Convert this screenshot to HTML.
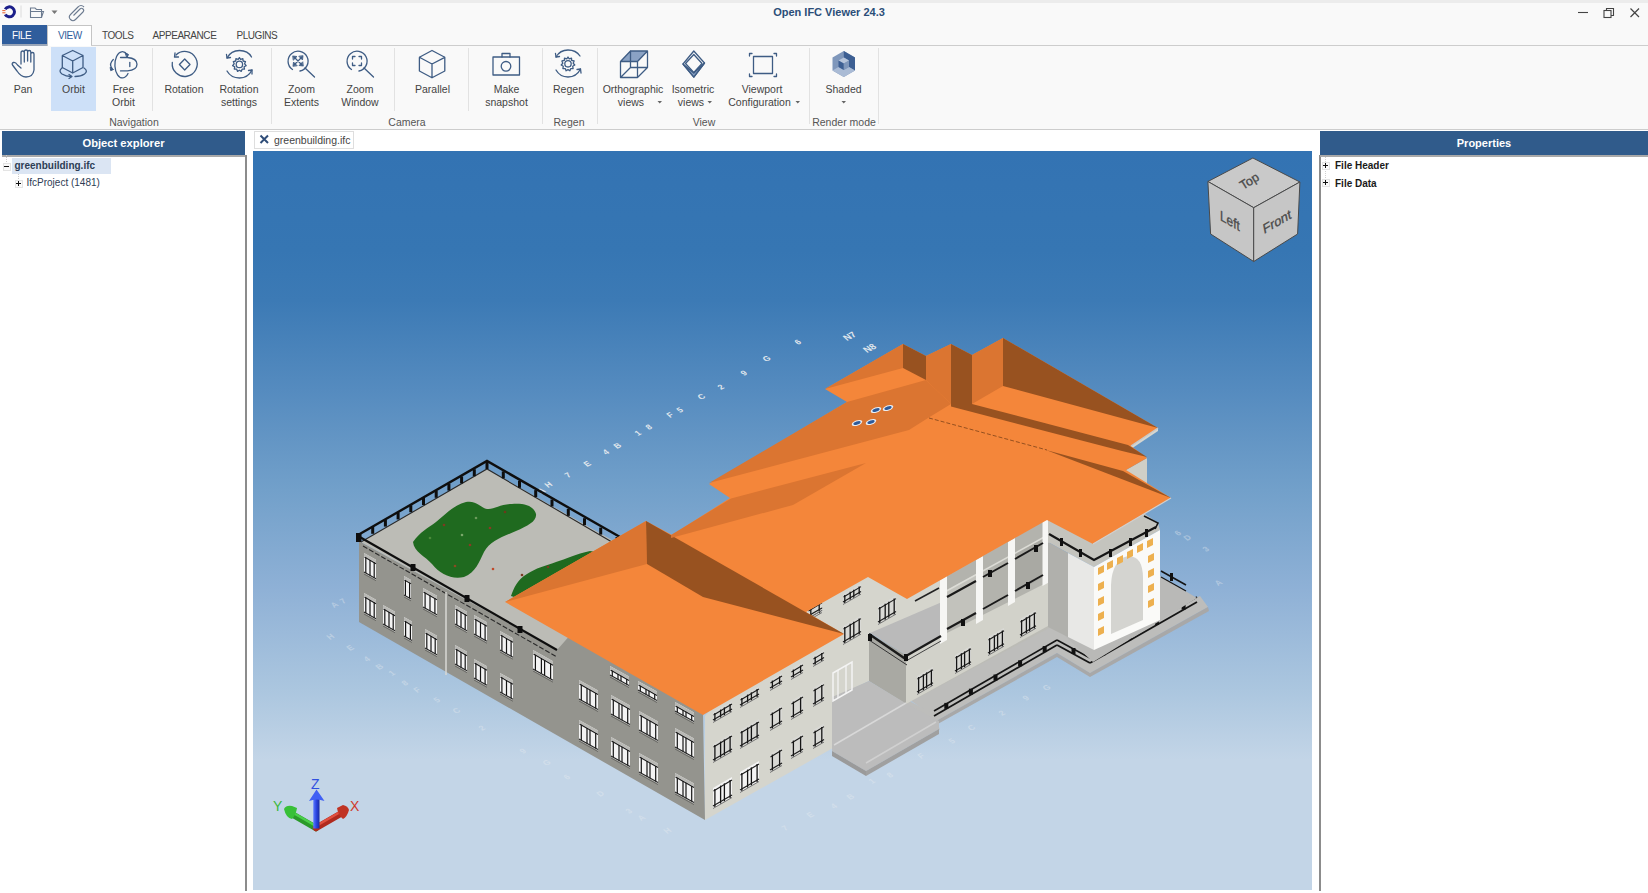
<!DOCTYPE html>
<html><head><meta charset="utf-8">
<style>
*{margin:0;padding:0;box-sizing:border-box}
html,body{width:1648px;height:893px;overflow:hidden;background:#ffffff;font-family:"Liberation Sans",sans-serif;position:relative}
.a{position:absolute}
.t{position:absolute;white-space:nowrap;font-size:10.5px;color:#444;line-height:13.5px}
.c{text-align:center;transform:translateX(-50%)}
.sep{position:absolute;width:1px;background:#e2e2e2}
.hdr{position:absolute;background:#305b8b;color:#fff;font-weight:bold;font-size:11.2px;text-align:center;line-height:24px}
svg.i{position:absolute;overflow:visible}
svg.i *{fill:none;stroke:#3e5c84;stroke-width:1.3;stroke-linecap:round;stroke-linejoin:round}
.tab{position:absolute;white-space:nowrap;font-size:10px;letter-spacing:-0.45px;color:#444;line-height:12px;top:30px}
</style></head><body>
<!-- title bar -->
<div class="a" style="left:0;top:0;width:1648px;height:45px;background:#f9f9f9"></div>
<div class="a" style="left:0;top:0;width:1648px;height:3px;background:#ececec"></div>
<svg class="a" style="left:0;top:0" width="100" height="25">
 <path d="M5.2,9.3 A5,5 0 1 1 5.2,14.4" fill="none" stroke="#1b1f8a" stroke-width="3"/>
 <rect x="2.3" y="10.1" width="3.2" height="1" fill="#e8602e"/>
 <rect x="2.3" y="12.3" width="3.2" height="1" fill="#e8602e"/>
 <line x1="21" y1="5.5" x2="21" y2="17.5" stroke="#dcdcdc" stroke-width="1"/>
 <path d="M30.5,8 L35,8 L36.5,9.5 L41.5,9.5 L41.5,17.5 L30.5,17.5 Z M30.5,11.5 L43.5,11.5 L41.5,17.5" fill="none" stroke="#6c7b90" stroke-width="1.1"/>
 <path d="M51.5,10.5 L57.5,10.5 L54.5,14 Z" fill="#777"/>
 <path d="M73.5,15.5 L80,9 Q81.5,7.5 83,9 Q84.5,10.5 83,12 L75.5,19.5 Q73,22 70.5,19.5 Q68,17 70.5,14.5 L78,7 Q81,4 84,7" fill="none" stroke="#6c7b90" stroke-width="1.1"/>
</svg>
<div class="t" style="left:829px;top:5px;font-size:11px;font-weight:bold;color:#2b4e78;transform:translateX(-50%);line-height:14px">Open IFC Viewer 24.3</div>
<svg class="a" style="left:1570px;top:0" width="78" height="25">
 <line x1="8" y1="12.5" x2="18" y2="12.5" stroke="#444" stroke-width="1.1"/>
 <rect x="34" y="10.5" width="7" height="7" fill="none" stroke="#444" stroke-width="1.1"/>
 <path d="M36.5,10.5 L36.5,8.5 L43.5,8.5 L43.5,15.5 L41,15.5" fill="none" stroke="#444" stroke-width="1.1"/>
 <path d="M60.5,8.5 L69,17 M69,8.5 L60.5,17" stroke="#444" stroke-width="1.2"/>
</svg>

<!-- tab row -->
<div class="a" style="left:2px;top:25px;width:46px;height:19px;background:#2f5d9c"></div>
<div class="a" style="left:2px;top:44px;width:46px;height:1.5px;background:#9aa6b8"></div>
<div class="tab" style="left:12px;color:#fff">FILE</div>
<div class="a" style="left:47px;top:25px;width:44.5px;height:21px;background:#fff;border:1px solid #c4c4c4;border-bottom:none"></div>
<div class="tab" style="left:58px;color:#2f5d9c">VIEW</div>
<div class="tab" style="left:102px">TOOLS</div>
<div class="tab" style="left:152.5px">APPEARANCE</div>
<div class="tab" style="left:236.5px">PLUGINS</div>
<div class="a" style="left:91px;top:45px;width:1557px;height:1px;background:#cdcdcd"></div>

<div class="a" style="left:0;top:46px;width:1648px;height:84px;background:#f9f9f9;border-bottom:1px solid #cdcdcd"></div>
<div class="a" style="left:51px;top:47px;width:45px;height:64px;background:#cde0f8"></div>

<div class="sep" style="left:152px;top:48px;height:63px"></div>
<div class="sep" style="left:271px;top:48px;height:76px"></div>
<div class="sep" style="left:394px;top:48px;height:63px"></div>
<div class="sep" style="left:468px;top:48px;height:63px"></div>
<div class="sep" style="left:542px;top:48px;height:76px"></div>
<div class="sep" style="left:597px;top:48px;height:76px"></div>
<div class="sep" style="left:809px;top:48px;height:76px"></div>
<div class="sep" style="left:878px;top:48px;height:76px"></div>


<svg class="i" style="left:0;top:45px" width="900" height="40">
 <!-- pan hand -->
 <path d="M21,19 L21,8 Q21,6 22.7,6 Q24.3,6 24.3,8 L24.3,17 M24.3,16 L24.3,6.5 Q24.3,5 26,5 Q27.6,5 27.6,6.5 L27.6,16 M27.6,16 L27.6,7 Q27.6,5.5 29.2,5.5 Q30.8,5.5 30.8,7 L30.8,17 M30.8,17 L30.8,9 Q30.8,7.5 32.4,7.5 Q34,7.5 34,9 L34,25 Q33,32 26,32 Q21,32 17,26 L12.5,20 Q11.5,18 13.5,17.5 Q15.5,17 17.5,20 L21,23"/>
 <!-- orbit cube -->
 <path d="M72.7,5.5 L83,10.5 L83,22.5 L72.7,28 L62.3,22.5 L62.3,10.5 Z M62.3,10.5 L72.7,16 L83,10.5 M72.7,16 L72.7,28"/>
 <path d="M62,23 Q58,26 62,29 Q66,31.5 71,31.5 M75,31.5 Q81,31.5 84.5,29 Q88.5,26 84,23"/>
 <path d="M69,29.5 L72,31.5 L69,33.5" />
 <!-- free orbit -->
 <path d="M127,9.5 A7.5,13.1 0 1 0 128,28.5"/>
 <path d="M125.5,8 L128.5,9.5 L127,12.5 Z" style="fill:#3e5c84;stroke-width:1"/>
 <path d="M120.5,12.5 L127.5,12.5 Q137,13.5 137,19.2 Q137,25 127.5,25.9 L120.5,25.9"/>
 <line x1="129.8" y1="17.5" x2="129.8" y2="21.5"/>
 <path d="M113.3,14.5 Q108.5,19 112,23.5"/>
 <path d="M110.5,22.5 L113.5,24.5 L111,25.5 Z" style="fill:#3e5c84;stroke-width:1"/>
 <!-- rotation -->
 <path d="M176,10 A12.5,12.5 0 1 1 172.3,17.5"/>
 <path d="M175,8 L174.5,12 L178.5,12"/>
 <path d="M184.7,14 L190,19.5 L184.7,25 L179.4,19.5 Z"/>
 <!-- rotation settings -->
 <path d="M227,13 Q231,5.5 239.5,5.5 Q248,5.5 251.5,12 M252,25 Q248,33 239.5,33 Q231,33 227,26"/>
 <path d="M226.5,9.5 L227,13 L230.5,12.5 M252,29 L252,25 L248.5,25.5"/>
 <circle cx="239.4" cy="19.4" r="3.2"/>
 <path d="M239.4,12.6 L240.6,14.4 L242.9,13.7 L243.1,16 L245.5,16.6 L244.6,18.8 L246.2,20.6 L244.1,21.8 L244.5,24.1 L242.1,24.2 L241.3,26.4 L239.4,25.2 L237.5,26.4 L236.7,24.2 L234.3,24.1 L234.7,21.8 L232.6,20.6 L234.2,18.8 L233.3,16.6 L235.7,16 L235.9,13.7 L238.2,14.4 Z"/>
 <!-- zoom extents -->
 <path d="M292.5,24.5 A10,10 0 1 1 300,26"/>
 <line x1="305" y1="23" x2="314.5" y2="32"/>
 <path d="M295,13 L301,19 M301,13 L295,19"/>
 <path d="M293,11 L297,11.5 L293.5,15 Z M303,11 L302.5,15 L299,11.5 Z M303,21 L299,20.5 L302.5,17 Z M293,21 L293.5,17 L297,20.5 Z" style="fill:#3e5c84;stroke-width:0.8"/>
 <!-- zoom window -->
 <path d="M351.5,24.5 A10,10 0 1 1 359,26"/>
 <line x1="364" y1="23" x2="373.5" y2="32"/>
 <path d="M352.5,14 L352.5,11.5 L355,11.5 M359,11.5 L361.5,11.5 L361.5,14 M361.5,18 L361.5,20.5 L359,20.5 M355,20.5 L352.5,20.5 L352.5,18"/>
 <!-- parallel cube -->
 <path d="M432,5.5 L444.8,12.3 L444.8,26 L432,32.8 L419.4,26 L419.4,12.3 Z M419.4,12.3 L432,19 L444.8,12.3 M432,19 L432,32.8"/>
 <!-- camera -->
 <rect x="493" y="12" width="26.5" height="18"/>
 <path d="M502,12 L502,8.5 L510,8.5 L510,12"/>
 <circle cx="506" cy="21.3" r="4.8"/>
 <!-- regen -->
 <path d="M556,12 Q560,5 568,5 Q576,5 580,11 M580.5,24 Q576.5,32 568,32 Q560,32 556,25"/>
 <path d="M555.5,8.5 L556,12 L559.5,11.5 M581,28 L580.5,24 L577,24.5"/>
 <circle cx="568" cy="18.8" r="3.2"/>
 <path d="M568,12 L569.2,13.8 L571.5,13.1 L571.7,15.4 L574.1,16 L573.2,18.2 L574.8,20 L572.7,21.2 L573.1,23.5 L570.7,23.6 L569.9,25.8 L568,24.6 L566.1,25.8 L565.3,23.6 L562.9,23.5 L563.3,21.2 L561.2,20 L562.8,18.2 L561.9,16 L564.3,15.4 L564.5,13.1 L566.8,13.8 Z"/>
 <!-- ortho -->
 <path d="M630.5,6 L647.5,6 L637.5,16.5 L620.5,16.5 Z" style="fill:#8aa2c4;stroke:none"/>
 <path d="M620.5,16.5 L637.5,16.5 L637.5,32.5 L620.5,32.5 Z M630.5,6 L647.5,6 L647.5,22.5 L637.5,32.5 M620.5,16.5 L630.5,6 M637.5,16.5 L647.5,6 M620.5,32.5 L630.5,22.5 L647.5,22.5 M630.5,6 L630.5,22.5"/>
 <!-- iso -->
 <path d="M693.8,6 L704.5,18 L693.8,32 L683,19 Z"/>
 <path d="M683,19 L693.8,28 L704.5,18 L693.8,32 Z" style="fill:#8aa2c4;stroke:#3e5c84"/>
 <path d="M693.8,9.5 L702,18.5 L693.8,27.5 L685.5,18.5 Z"/>
 <!-- viewport -->
 <path d="M752,8.5 L749.5,8.5 L749.5,11 M774,8.5 L776.5,8.5 L776.5,11 M749.5,29 L749.5,31.5 L752,31.5 M776.5,29 L776.5,31.5 L774,31.5"/>
 <rect x="753.5" y="11.5" width="19" height="17"/>
 <!-- shaded -->
 <path d="M843.8,6 L855,12.5 L855,25.5 L843.8,32 L832.5,25.5 L832.5,12.5 Z" style="fill:#7f97bb;stroke:none"/>
 <path d="M843.8,6 L855,12.5 L855,25.5 L849,22 L849,15.5 L843.8,12.5 Z" style="fill:#3d5f93;stroke:none"/>
 <path d="M832.5,25.5 L843.8,32 L855,25.5 L849,22 L843.8,25 L838.5,22 Z" style="fill:#aabbd5;stroke:none"/>
 <path d="M843.8,12.5 L849,15.5 L843.8,18.5 L838.5,15.5 Z" style="fill:#b7c5db;stroke:none"/>
 <path d="M838.5,15.5 L843.8,18.5 L843.8,25 L838.5,22 Z" style="fill:#3d5f93;stroke:none"/>
 <path d="M849,15.5 L843.8,18.5 L843.8,25 L849,22 Z" style="fill:#7f97bb;stroke:none"/>
</svg>


<div class="t c" style="left:23px;top:82.5px">Pan</div>
<div class="t c" style="left:73.5px;top:82.5px">Orbit</div>
<div class="t c" style="left:123.5px;top:82.5px">Free<br>Orbit</div>
<div class="t c" style="left:184px;top:82.5px">Rotation</div>
<div class="t c" style="left:239px;top:82.5px">Rotation<br>settings</div>
<div class="t c" style="left:301.5px;top:82.5px">Zoom<br>Extents</div>
<div class="t c" style="left:360px;top:82.5px">Zoom<br>Window</div>
<div class="t c" style="left:432.5px;top:82.5px">Parallel</div>
<div class="t c" style="left:506.5px;top:82.5px">Make<br>snapshot</div>
<div class="t c" style="left:568.5px;top:82.5px">Regen</div>
<div class="t c" style="left:633px;top:82.5px">Orthographic</div>
<div class="t c" style="left:631px;top:96px">views</div>
<div class="t c" style="left:693px;top:82.5px">Isometric</div>
<div class="t c" style="left:691px;top:96px">views</div>
<div class="t c" style="left:762px;top:82.5px">Viewport</div>
<div class="t c" style="left:759.5px;top:96px">Configuration</div>
<div class="t c" style="left:843.5px;top:82.5px">Shaded</div>
<svg class="a" style="left:0;top:95px" width="900" height="12">
 <path d="M657.5,6 L662,6 L659.75,8.5 Z M707.5,6 L712,6 L709.75,8.5 Z M795.5,6 L800,6 L797.75,8.5 Z M841.5,6 L846,6 L843.75,8.5 Z" fill="#666"/>
</svg>
<div class="t c" style="left:134px;top:115.5px;color:#555">Navigation</div>
<div class="t c" style="left:407px;top:115.5px;color:#555">Camera</div>
<div class="t c" style="left:569px;top:115.5px;color:#555">Regen</div>
<div class="t c" style="left:704px;top:115.5px;color:#555">View</div>
<div class="t c" style="left:844px;top:115.5px;color:#555">Render mode</div>

<!-- left panel -->
<div class="hdr" style="left:2px;top:131px;width:243px;height:23.5px">Object explorer</div>
<div class="a" style="left:2px;top:154.5px;width:243px;height:2.5px;background:#a9a9a9"></div>
<div class="a" style="left:245px;top:155px;width:1.8px;height:736px;background:#8c8c8c"></div>
<div class="a" style="left:12px;top:157.5px;width:99px;height:16.5px;background:#dbe5f3"></div>
<svg class="a" style="left:0;top:155px" width="40" height="40" shape-rendering="crispEdges">
 <rect x="3" y="8" width="7" height="7" fill="#fafafa" stroke="#e4e4e4"/>
 <line x1="4" y1="11.5" x2="9" y2="11.5" stroke="#111" stroke-width="1.2"/>
 <line x1="6.5" y1="0" x2="6.5" y2="7" stroke="#ccc" stroke-dasharray="1,1"/>
 <line x1="18.5" y1="19" x2="18.5" y2="24" stroke="#ccc" stroke-dasharray="1,1"/>
 <rect x="15" y="25" width="7" height="7" fill="#fafafa" stroke="#e4e4e4"/>
 <line x1="16" y1="28.5" x2="21" y2="28.5" stroke="#111" stroke-width="1.1"/>
 <line x1="18.5" y1="26" x2="18.5" y2="31" stroke="#111" stroke-width="1.1"/>
</svg>
<div class="t" style="left:14.5px;top:159px;font-size:10px;font-weight:bold;color:#2d3d55">greenbuilding.ifc</div>
<div class="t" style="left:26.5px;top:176px;font-size:10px;color:#2d3d55">IfcProject (1481)</div>

<!-- doc tab -->
<div class="a" style="left:254px;top:131px;width:100px;height:18px;background:#fff;border:1px solid #dedede"></div>
<svg class="a" style="left:259px;top:134px" width="12" height="12"><path d="M1.5,1.5 L9,9 M9,1.5 L1.5,9" stroke="#2f4d78" stroke-width="2"/></svg>
<div class="t" style="left:274px;top:133.5px;font-size:10.5px;color:#444">greenbuilding.ifc</div>

<!-- viewport -->
<div class="a" id="vp" style="left:253px;top:151px;width:1059px;height:739px;background:linear-gradient(#3373b3 0%,#3676b3 13.4%,#3c7ab5 20.2%,#558bbf 32.3%,#72a0ca 45.9%,#8fb1d6 59.4%,#abc6df 72.9%,#c3d5e7 82.4%,#c3d5e7 100%);overflow:hidden"><svg width="1059" height="739" viewBox="253 151 1059 739" style="position:absolute;left:0;top:0"><text x="0" y="0" font-family="Liberation Sans" font-size="8" font-weight="bold" fill="#e8ecf0" opacity="0.95" transform="translate(541,494) rotate(-28) skewX(20)">A</text>
<text x="0" y="0" font-family="Liberation Sans" font-size="8" font-weight="bold" fill="#e8ecf0" opacity="0.95" transform="translate(548,488) rotate(-28) skewX(20)">H</text>
<text x="0" y="0" font-family="Liberation Sans" font-size="8" font-weight="bold" fill="#e8ecf0" opacity="0.95" transform="translate(568,478) rotate(-28) skewX(20)">7</text>
<text x="0" y="0" font-family="Liberation Sans" font-size="8" font-weight="bold" fill="#e8ecf0" opacity="0.95" transform="translate(587,467) rotate(-28) skewX(20)">E</text>
<text x="0" y="0" font-family="Liberation Sans" font-size="8" font-weight="bold" fill="#e8ecf0" opacity="0.95" transform="translate(606,455) rotate(-28) skewX(20)">4</text>
<text x="0" y="0" font-family="Liberation Sans" font-size="8" font-weight="bold" fill="#e8ecf0" opacity="0.95" transform="translate(617,449) rotate(-28) skewX(20)">B</text>
<text x="0" y="0" font-family="Liberation Sans" font-size="8" font-weight="bold" fill="#e8ecf0" opacity="0.95" transform="translate(638,436) rotate(-28) skewX(20)">1</text>
<text x="0" y="0" font-family="Liberation Sans" font-size="8" font-weight="bold" fill="#e8ecf0" opacity="0.95" transform="translate(649,430) rotate(-28) skewX(20)">8</text>
<text x="0" y="0" font-family="Liberation Sans" font-size="8" font-weight="bold" fill="#e8ecf0" opacity="0.95" transform="translate(670,418) rotate(-28) skewX(20)">F</text>
<text x="0" y="0" font-family="Liberation Sans" font-size="8" font-weight="bold" fill="#e8ecf0" opacity="0.95" transform="translate(680,413) rotate(-28) skewX(20)">5</text>
<text x="0" y="0" font-family="Liberation Sans" font-size="8" font-weight="bold" fill="#e8ecf0" opacity="0.95" transform="translate(701,400) rotate(-28) skewX(20)">C</text>
<text x="0" y="0" font-family="Liberation Sans" font-size="8" font-weight="bold" fill="#e8ecf0" opacity="0.95" transform="translate(721,390) rotate(-28) skewX(20)">2</text>
<text x="0" y="0" font-family="Liberation Sans" font-size="8" font-weight="bold" fill="#e8ecf0" opacity="0.95" transform="translate(744,376) rotate(-28) skewX(20)">9</text>
<text x="0" y="0" font-family="Liberation Sans" font-size="8" font-weight="bold" fill="#e8ecf0" opacity="0.95" transform="translate(766,362) rotate(-28) skewX(20)">G</text>
<text x="0" y="0" font-family="Liberation Sans" font-size="8" font-weight="bold" fill="#e8ecf0" opacity="0.95" transform="translate(798,345) rotate(-28) skewX(20)">6</text>
<text x="0" y="0" font-family="Liberation Sans" font-size="9" font-weight="bold" fill="#e8ecf0" opacity="0.95" transform="translate(847,341) rotate(-28) skewX(20)">N7</text>
<text x="0" y="0" font-family="Liberation Sans" font-size="9" font-weight="bold" fill="#e8ecf0" opacity="0.95" transform="translate(867,353) rotate(-28) skewX(20)">N8</text>
<text x="0" y="0" font-family="Liberation Sans" font-size="8" font-weight="bold" fill="#e8ecf0" opacity="0.40" transform="translate(334,608) rotate(-28) skewX(20)">A</text>
<text x="0" y="0" font-family="Liberation Sans" font-size="8" font-weight="bold" fill="#e8ecf0" opacity="0.40" transform="translate(330,640) rotate(-28) skewX(20)">H</text>
<text x="0" y="0" font-family="Liberation Sans" font-size="8" font-weight="bold" fill="#e8ecf0" opacity="0.40" transform="translate(343,604) rotate(-28) skewX(20)">7</text>
<text x="0" y="0" font-family="Liberation Sans" font-size="8" font-weight="bold" fill="#e8ecf0" opacity="0.40" transform="translate(350,651) rotate(-28) skewX(20)">E</text>
<text x="0" y="0" font-family="Liberation Sans" font-size="8" font-weight="bold" fill="#e8ecf0" opacity="0.40" transform="translate(367,662) rotate(-28) skewX(20)">4</text>
<text x="0" y="0" font-family="Liberation Sans" font-size="8" font-weight="bold" fill="#e8ecf0" opacity="0.40" transform="translate(379,670) rotate(-28) skewX(20)">B</text>
<text x="0" y="0" font-family="Liberation Sans" font-size="8" font-weight="bold" fill="#e8ecf0" opacity="0.40" transform="translate(392,676) rotate(-28) skewX(20)">1</text>
<text x="0" y="0" font-family="Liberation Sans" font-size="8" font-weight="bold" fill="#e8ecf0" opacity="0.40" transform="translate(405,686) rotate(-28) skewX(20)">8</text>
<text x="0" y="0" font-family="Liberation Sans" font-size="8" font-weight="bold" fill="#e8ecf0" opacity="0.40" transform="translate(417,693) rotate(-28) skewX(20)">F</text>
<text x="0" y="0" font-family="Liberation Sans" font-size="8" font-weight="bold" fill="#e8ecf0" opacity="0.40" transform="translate(437,703) rotate(-28) skewX(20)">5</text>
<text x="0" y="0" font-family="Liberation Sans" font-size="8" font-weight="bold" fill="#e8ecf0" opacity="0.40" transform="translate(456,714) rotate(-28) skewX(20)">C</text>
<text x="0" y="0" font-family="Liberation Sans" font-size="8" font-weight="bold" fill="#e8ecf0" opacity="0.40" transform="translate(482,731) rotate(-28) skewX(20)">2</text>
<text x="0" y="0" font-family="Liberation Sans" font-size="8" font-weight="bold" fill="#e8ecf0" opacity="0.40" transform="translate(523,754) rotate(-28) skewX(20)">9</text>
<text x="0" y="0" font-family="Liberation Sans" font-size="8" font-weight="bold" fill="#e8ecf0" opacity="0.40" transform="translate(546,766) rotate(-28) skewX(20)">G</text>
<text x="0" y="0" font-family="Liberation Sans" font-size="8" font-weight="bold" fill="#e8ecf0" opacity="0.40" transform="translate(567,780) rotate(-28) skewX(20)">6</text>
<text x="0" y="0" font-family="Liberation Sans" font-size="8" font-weight="bold" fill="#e8ecf0" opacity="0.40" transform="translate(600,797) rotate(-28) skewX(20)">D</text>
<text x="0" y="0" font-family="Liberation Sans" font-size="8" font-weight="bold" fill="#e8ecf0" opacity="0.40" transform="translate(629,814) rotate(-28) skewX(20)">3</text>
<text x="0" y="0" font-family="Liberation Sans" font-size="8" font-weight="bold" fill="#e8ecf0" opacity="0.40" transform="translate(641,821) rotate(-28) skewX(20)">A</text>
<text x="0" y="0" font-family="Liberation Sans" font-size="8" font-weight="bold" fill="#e8ecf0" opacity="0.40" transform="translate(667,834) rotate(-28) skewX(20)">H</text>
<text x="0" y="0" font-family="Liberation Sans" font-size="8" font-weight="bold" fill="#e8ecf0" opacity="0.40" transform="translate(785,831) rotate(-28) skewX(20)">7</text>
<text x="0" y="0" font-family="Liberation Sans" font-size="8" font-weight="bold" fill="#e8ecf0" opacity="0.40" transform="translate(810,818) rotate(-28) skewX(20)">E</text>
<text x="0" y="0" font-family="Liberation Sans" font-size="8" font-weight="bold" fill="#e8ecf0" opacity="0.40" transform="translate(834,809) rotate(-28) skewX(20)">4</text>
<text x="0" y="0" font-family="Liberation Sans" font-size="8" font-weight="bold" fill="#e8ecf0" opacity="0.40" transform="translate(850,800) rotate(-28) skewX(20)">B</text>
<text x="0" y="0" font-family="Liberation Sans" font-size="8" font-weight="bold" fill="#e8ecf0" opacity="0.40" transform="translate(872,784) rotate(-28) skewX(20)">1</text>
<text x="0" y="0" font-family="Liberation Sans" font-size="8" font-weight="bold" fill="#e8ecf0" opacity="0.40" transform="translate(890,778) rotate(-28) skewX(20)">8</text>
<text x="0" y="0" font-family="Liberation Sans" font-size="8" font-weight="bold" fill="#e8ecf0" opacity="0.40" transform="translate(921,759) rotate(-28) skewX(20)">F</text>
<text x="0" y="0" font-family="Liberation Sans" font-size="8" font-weight="bold" fill="#e8ecf0" opacity="0.40" transform="translate(952,744) rotate(-28) skewX(20)">5</text>
<text x="0" y="0" font-family="Liberation Sans" font-size="8" font-weight="bold" fill="#e8ecf0" opacity="0.40" transform="translate(971,731) rotate(-28) skewX(20)">C</text>
<text x="0" y="0" font-family="Liberation Sans" font-size="8" font-weight="bold" fill="#e8ecf0" opacity="0.40" transform="translate(1002,716) rotate(-28) skewX(20)">2</text>
<text x="0" y="0" font-family="Liberation Sans" font-size="8" font-weight="bold" fill="#e8ecf0" opacity="0.40" transform="translate(1026,701) rotate(-28) skewX(20)">9</text>
<text x="0" y="0" font-family="Liberation Sans" font-size="8" font-weight="bold" fill="#e8ecf0" opacity="0.40" transform="translate(1046,691) rotate(-28) skewX(20)">G</text>
<text x="0" y="0" font-family="Liberation Sans" font-size="8" font-weight="bold" fill="#e8ecf0" opacity="0.40" transform="translate(1178,536) rotate(-28) skewX(20)">6</text>
<text x="0" y="0" font-family="Liberation Sans" font-size="8" font-weight="bold" fill="#e8ecf0" opacity="0.40" transform="translate(1187,541) rotate(-28) skewX(20)">D</text>
<text x="0" y="0" font-family="Liberation Sans" font-size="8" font-weight="bold" fill="#e8ecf0" opacity="0.40" transform="translate(1206,552) rotate(-28) skewX(20)">3</text>
<text x="0" y="0" font-family="Liberation Sans" font-size="8" font-weight="bold" fill="#e8ecf0" opacity="0.40" transform="translate(1218,586) rotate(-28) skewX(20)">A</text>
<polygon points="907.0,698.0 1048.0,620.0 1090.0,642.0 1200.0,596.0 1208.0,607.0 1090.0,673.0 1057.0,653.0 936.0,721.0 933.0,716.0" fill="#bdbdbb" />
<polygon points="936.0,721.0 1057.0,653.0 1090.0,673.0 1208.0,607.0 1209.0,611.0 1090.0,677.0 1057.0,657.0 936.0,725.0" fill="#a8a8a8" />
<polygon points="900.0,696.0 934.0,714.0 940.0,730.0 900.0,712.0" fill="#bdbdbb" />
<polyline points="934.0,711.0 1057.0,640.0" fill="none" stroke="#151515" stroke-width="1.6" />
<polyline points="934.0,716.0 1057.0,645.0" fill="none" stroke="#151515" stroke-width="1.8" />
<rect x="944.3" y="702.9" width="4" height="6" fill="#111"/>
<rect x="968.9" y="688.7" width="4" height="6" fill="#111"/>
<rect x="993.5" y="674.5" width="4" height="6" fill="#111"/>
<rect x="1018.1" y="660.3" width="4" height="6" fill="#111"/>
<rect x="1042.7" y="646.1" width="4" height="6" fill="#111"/>
<polyline points="1057.0,640.0 1090.0,658.0" fill="none" stroke="#151515" stroke-width="1.6" />
<polyline points="1057.0,645.0 1090.0,663.0" fill="none" stroke="#151515" stroke-width="1.8" />
<rect x="1071.5" y="648.0" width="4" height="6" fill="#111"/>
<polyline points="1090.0,658.0 1197.0,597.0" fill="none" stroke="#151515" stroke-width="1.6" />
<polyline points="1090.0,663.0 1197.0,602.0" fill="none" stroke="#151515" stroke-width="1.8" />
<rect x="1101.4" y="649.4" width="4" height="6" fill="#111"/>
<rect x="1128.1" y="634.1" width="4" height="6" fill="#111"/>
<rect x="1154.9" y="618.9" width="4" height="6" fill="#111"/>
<rect x="1181.6" y="603.6" width="4" height="6" fill="#111"/>
<polygon points="1048.0,620.0 1094.0,645.0 1160.0,612.0 1160.0,576.0 1197.0,598.0 1093.0,662.0" fill="#b9b9b7" />
<polyline points="1161.0,571.0 1186.0,585.0" fill="none" stroke="#151515" stroke-width="1.6" />
<polyline points="1161.0,577.0 1186.0,591.0" fill="none" stroke="#151515" stroke-width="1.2" />
<rect x="1170" y="573" width="3" height="8" fill="#111"/>
<polygon points="705.0,716.0 806.0,600.0 868.0,568.0 945.0,540.0 945.0,602.0 878.0,634.0 869.0,633.0 869.0,681.0 833.0,698.0 833.0,748.0 705.0,820.0" fill="#d5d5cd" />
<polygon points="941.0,570.0 1049.0,510.0 1049.0,628.0 906.0,704.0 906.0,655.0 941.0,636.0" fill="#bcbcb6" />
<polygon points="941.0,580.0 1048.0,519.0 1048.0,582.0 941.0,642.0" fill="#b3b3ad" />
<polygon points="947.0,590.0 976.0,574.0 976.0,614.0 947.0,630.0" fill="#c2c2bc" />
<polygon points="1015.0,553.0 1043.0,537.0 1043.0,577.0 1015.0,593.0" fill="#a9a9a3" />
<polyline points="941.0,594.0 1048.0,535.0" fill="none" stroke="#dcdcd6" stroke-width="1.6" />
<polygon points="906.0,655.0 941.0,636.0 1048.0,582.0 1048.0,626.0 906.0,704.0" fill="#d2d2ca" />
<polygon points="869.0,633.0 906.0,655.0 906.0,704.0 869.0,681.0" fill="#a9a9a3" />
<polygon points="870.0,633.0 906.0,655.0 942.0,636.0 942.0,602.0" fill="#bababa" />
<polygon points="940.0,580.0 947.0,576.0 947.0,640.0 940.0,644.0" fill="#f6f6f4" />
<polygon points="976.0,560.0 983.0,556.0 983.0,620.0 976.0,624.0" fill="#f6f6f4" />
<polygon points="1008.0,542.0 1015.0,538.0 1015.0,602.0 1008.0,606.0" fill="#f6f6f4" />
<polygon points="1042.5,521.0 1049.5,517.0 1049.5,582.0 1042.5,586.0" fill="#f6f6f4" />
<polyline points="869.0,634.0 907.0,660.0" fill="none" stroke="#1a1a1a" stroke-width="2.4" />
<polyline points="869.0,640.0 907.0,665.0" fill="none" stroke="#333" stroke-width="1" />
<polyline points="906.0,656.0 941.0,636.0" fill="none" stroke="#1a1a1a" stroke-width="2.2" />
<polyline points="906.0,661.0 941.0,641.0" fill="none" stroke="#444" stroke-width="1" />
<polyline points="915.0,601.0 939.0,588.0" fill="none" stroke="#222" stroke-width="1.5" />
<polyline points="947.0,629.0 976.0,613.0" fill="none" stroke="#1a1a1a" stroke-width="2" />
<polyline points="983.0,609.0 1008.0,595.0" fill="none" stroke="#1a1a1a" stroke-width="2" />
<polyline points="1015.0,591.0 1043.0,575.0" fill="none" stroke="#1a1a1a" stroke-width="2" />
<polyline points="947.0,597.0 976.0,581.0" fill="none" stroke="#1a1a1a" stroke-width="2" />
<polyline points="983.0,577.0 1008.0,563.0" fill="none" stroke="#1a1a1a" stroke-width="2" />
<polyline points="1015.0,559.0 1043.0,543.0" fill="none" stroke="#1a1a1a" stroke-width="2" />
<rect x="961" y="619" width="4" height="7" fill="#111"/>
<rect x="1026" y="582" width="4" height="7" fill="#111"/>
<rect x="988" y="570" width="4" height="7" fill="#111"/>
<rect x="1034" y="545" width="4" height="7" fill="#111"/>
<rect x="904" y="654" width="4" height="7" fill="#111"/>
<rect x="868" y="634" width="4" height="7" fill="#111"/>
<polygon points="832.0,697.0 869.0,681.0 907.0,704.0 939.0,721.0 939.0,729.0 866.0,771.0 832.0,751.0" fill="#bcbcbc" />
<polyline points="834.0,745.0 906.0,703.0" fill="none" stroke="#d8d8d8" stroke-width="1.5" />
<polyline points="866.0,763.0 936.0,722.0" fill="none" stroke="#d0d0d0" stroke-width="1.5" />
<polygon points="832.0,751.0 866.0,771.0 866.0,776.0 832.0,756.0" fill="#9a9a9a" />
<polygon points="866.0,771.0 939.0,729.0 939.0,734.0 866.0,776.0" fill="#a0a0a0" />
<polygon points="833.0,673.0 852.0,662.0 852.0,690.0 833.0,701.0" fill="none" stroke="#f4f4f4" stroke-width="1.5"/>
<polyline points="838.0,670.0 838.0,698.0" fill="none" stroke="#f4f4f4" stroke-width="1.3" />
<polyline points="846.0,666.0 846.0,693.0" fill="none" stroke="#f4f4f4" stroke-width="1.3" />
<polygon points="1048.0,515.0 1094.0,540.0 1142.0,512.0 1158.0,523.0 1160.0,530.0 1094.0,567.0 1048.0,542.0" fill="#c4c4be" />
<polygon points="1048.0,542.0 1068.0,553.0 1068.0,637.0 1048.0,627.0" fill="#b0b0ac" />
<polygon points="1068.0,553.0 1094.0,567.0 1094.0,650.0 1068.0,637.0" fill="#e8e8e6" />
<polygon points="1094.0,567.0 1160.0,530.0 1160.0,620.0 1094.0,650.0" fill="#fafaf8" />
<path d="M1111,634 L1111,585 Q1112,560 1128,556 Q1143,556 1143,578 L1143,620 Z" fill="#d4d4d0"/>
<polyline points="1049.0,534.0 1094.0,560.0 1156.0,527.0" fill="none" stroke="#151515" stroke-width="2.2" />
<rect x="1060" y="538" width="3" height="8" fill="#111"/>
<rect x="1079" y="549" width="3" height="8" fill="#111"/>
<rect x="1109" y="549" width="3" height="8" fill="#111"/>
<rect x="1129" y="538" width="3" height="8" fill="#111"/>
<rect x="1145" y="529" width="3" height="8" fill="#111"/>
<polyline points="1144.0,516.0 1158.0,523.0 1155.0,529.0" fill="none" stroke="#151515" stroke-width="1.6" />
<polygon points="1098.0,568.0 1104.0,565.0 1104.0,572.0 1098.0,575.0" fill="#edb04f" />
<polygon points="1107.0,563.0 1113.0,560.0 1113.0,567.0 1107.0,570.0" fill="#edb04f" />
<polygon points="1117.0,558.0 1123.0,555.0 1123.0,562.0 1117.0,565.0" fill="#edb04f" />
<polygon points="1127.0,552.0 1133.0,549.0 1133.0,556.0 1127.0,559.0" fill="#edb04f" />
<polygon points="1137.0,546.0 1143.0,543.0 1143.0,550.0 1137.0,553.0" fill="#edb04f" />
<polygon points="1147.0,541.0 1153.0,538.0 1153.0,545.0 1147.0,548.0" fill="#edb04f" />
<polygon points="1098.0,584.0 1104.0,581.0 1104.0,588.0 1098.0,591.0" fill="#edb04f" />
<polygon points="1098.0,599.0 1104.0,596.0 1104.0,603.0 1098.0,606.0" fill="#edb04f" />
<polygon points="1098.0,614.0 1104.0,611.0 1104.0,618.0 1098.0,621.0" fill="#edb04f" />
<polygon points="1098.0,629.0 1104.0,626.0 1104.0,633.0 1098.0,636.0" fill="#edb04f" />
<polygon points="1148.0,556.0 1154.0,553.0 1154.0,560.0 1148.0,563.0" fill="#edb04f" />
<polygon points="1148.0,571.0 1154.0,568.0 1154.0,575.0 1148.0,578.0" fill="#edb04f" />
<polygon points="1148.0,586.0 1154.0,583.0 1154.0,590.0 1148.0,593.0" fill="#edb04f" />
<polygon points="1148.0,601.0 1154.0,598.0 1154.0,605.0 1148.0,608.0" fill="#edb04f" />
<polygon points="1126.0,470.0 1147.0,458.0 1147.0,484.0 1126.0,496.0" fill="#cfcfc7" />
<polygon points="1131.0,446.0 1158.0,428.0 1158.0,431.0 1131.0,449.0" fill="#d6d6d0" />
<polygon points="359.0,541.0 555.0,648.0 555.0,628.0 703.0,713.0 705.0,820.0 359.0,622.0" fill="#94948e" />
<polygon points="361.0,542.0 487.0,469.0 640.0,556.0 557.0,650.0" fill="#bcbcb6" />
<path d="M413,542 C420,532 428,528 436,522 C446,514 452,506 466,502 C476,500 481,508 487,509 C494,510 500,504 512,504 C524,503 534,506 536,514 C537,521 528,526 516,531 C502,537 490,541 484,552 C479,562 476,572 464,577 C452,580 440,574 432,564 C425,556 414,552 413,542 Z" fill="#1f6a1f"/>
<path d="M511,596 C514,588 517,580 527,574 C536,568 545,566 556,562 C566,559 576,554 590,551 L620,556 L560,612 Z" fill="#1f6a1f"/>
<circle cx="444" cy="525" r="1.3" fill="#7d3a20"/>
<circle cx="470" cy="545" r="1.3" fill="#8a3a22"/>
<circle cx="490" cy="528" r="1.3" fill="#8a3a22"/>
<circle cx="505" cy="512" r="1.3" fill="#6a3a1a"/>
<circle cx="455" cy="566" r="1.3" fill="#8a4a22"/>
<circle cx="430" cy="538" r="1.3" fill="#4a8a3a"/>
<circle cx="476" cy="518" r="1.3" fill="#6a9a5a"/>
<circle cx="462" cy="535" r="1.3" fill="#7aa86a"/>
<circle cx="493" cy="569" r="1.3" fill="#c04a2a"/>
<circle cx="522" cy="575" r="1.3" fill="#7a3a20"/>
<circle cx="548" cy="567" r="1.3" fill="#7a3a20"/>
<polyline points="358.0,535.0 487.0,461.0 620.0,537.0" fill="none" stroke="#0e0e0e" stroke-width="2.4" />
<polyline points="361.0,542.0 487.0,469.0 617.0,545.0" fill="none" stroke="#2a2a2a" stroke-width="1.1" />
<polyline points="358.0,536.0 557.0,650.0" fill="none" stroke="#0e0e0e" stroke-width="2.2" />
<polyline points="363.0,546.0 557.0,657.0" fill="none" stroke="#2a2a2a" stroke-width="1.1" stroke-dasharray="5,2"/>
<rect x="358.5" y="534.0" width="3" height="7" fill="#0e0e0e"/>
<rect x="371.2" y="526.8" width="3" height="7" fill="#0e0e0e"/>
<rect x="383.9" y="519.6" width="3" height="7" fill="#0e0e0e"/>
<rect x="396.6" y="512.4" width="3" height="7" fill="#0e0e0e"/>
<rect x="409.3" y="505.2" width="3" height="7" fill="#0e0e0e"/>
<rect x="422.0" y="498.0" width="3" height="7" fill="#0e0e0e"/>
<rect x="434.7" y="490.8" width="3" height="7" fill="#0e0e0e"/>
<rect x="447.4" y="483.6" width="3" height="7" fill="#0e0e0e"/>
<rect x="460.1" y="476.4" width="3" height="7" fill="#0e0e0e"/>
<rect x="472.8" y="469.2" width="3" height="7" fill="#0e0e0e"/>
<rect x="485.5" y="462.0" width="3" height="7" fill="#0e0e0e"/>
<rect x="501.8" y="471.4" width="3" height="7" fill="#0e0e0e"/>
<rect x="518.0" y="480.8" width="3" height="7" fill="#0e0e0e"/>
<rect x="534.2" y="490.1" width="3" height="7" fill="#0e0e0e"/>
<rect x="550.5" y="499.5" width="3" height="7" fill="#0e0e0e"/>
<rect x="566.8" y="508.9" width="3" height="7" fill="#0e0e0e"/>
<rect x="583.0" y="518.2" width="3" height="7" fill="#0e0e0e"/>
<rect x="599.2" y="527.6" width="3" height="7" fill="#0e0e0e"/>
<rect x="615.5" y="537.0" width="3" height="7" fill="#0e0e0e"/>
<rect x="410.5" y="564.0" width="5" height="7" fill="#0e0e0e"/>
<rect x="464.5" y="595.0" width="5" height="7" fill="#0e0e0e"/>
<rect x="517.5" y="626.0" width="5" height="7" fill="#0e0e0e"/>
<rect x="356" y="533" width="5" height="9" fill="#0e0e0e"/>
<polyline points="446.0,592.0 446.0,675.0" fill="none" stroke="#d8d8d4" stroke-width="1.5" />
<polygon points="364.0,553.0 376.0,559.7 376.0,579.7 364.0,573.0" fill="#f3f3f3" />
<polygon points="364.0,553.0 376.0,559.7 376.0,562.7 364.0,556.0" fill="#b9b9b5" />
<polyline points="364.5,557.0 376.0,563.7" fill="none" stroke="#1a1a1a" stroke-width="1.1" />
<polyline points="365.8,557.5 365.8,573.0" fill="none" stroke="#151515" stroke-width="1.2" />
<polyline points="370.0,559.9 370.0,575.4" fill="none" stroke="#151515" stroke-width="1.2" />
<polyline points="374.2,562.2 374.2,577.7" fill="none" stroke="#151515" stroke-width="1.2" />
<polyline points="364.0,572.0 376.0,578.7" fill="none" stroke="#222" stroke-width="1.1" />
<polyline points="364.0,574.0 376.0,580.7" fill="none" stroke="#6a6a66" stroke-width="1" />
<polygon points="404.0,576.0 411.0,579.9 411.0,599.9 404.0,596.0" fill="#f3f3f3" />
<polygon points="404.0,576.0 411.0,579.9 411.0,582.9 404.0,579.0" fill="#b9b9b5" />
<polyline points="404.5,580.0 411.0,583.9" fill="none" stroke="#1a1a1a" stroke-width="1.1" />
<polyline points="405.4,580.3 405.4,595.8" fill="none" stroke="#151515" stroke-width="1.2" />
<polyline points="409.6,582.6 409.6,598.1" fill="none" stroke="#151515" stroke-width="1.2" />
<polyline points="404.0,595.0 411.0,598.9" fill="none" stroke="#222" stroke-width="1.1" />
<polyline points="404.0,597.0 411.0,600.9" fill="none" stroke="#6a6a66" stroke-width="1" />
<polygon points="423.0,588.0 437.0,595.8 437.0,615.8 423.0,608.0" fill="#f3f3f3" />
<polygon points="423.0,588.0 437.0,595.8 437.0,598.8 423.0,591.0" fill="#b9b9b5" />
<polyline points="423.5,592.0 437.0,599.8" fill="none" stroke="#1a1a1a" stroke-width="1.1" />
<polyline points="425.1,592.7 425.1,608.2" fill="none" stroke="#151515" stroke-width="1.2" />
<polyline points="430.0,595.4 430.0,610.9" fill="none" stroke="#151515" stroke-width="1.2" />
<polyline points="434.9,598.2 434.9,613.7" fill="none" stroke="#151515" stroke-width="1.2" />
<polyline points="423.0,607.0 437.0,614.8" fill="none" stroke="#222" stroke-width="1.1" />
<polyline points="423.0,609.0 437.0,616.8" fill="none" stroke="#6a6a66" stroke-width="1" />
<polygon points="455.0,605.0 467.0,611.7 467.0,631.7 455.0,625.0" fill="#f3f3f3" />
<polygon points="455.0,605.0 467.0,611.7 467.0,614.7 455.0,608.0" fill="#b9b9b5" />
<polyline points="455.5,609.0 467.0,615.7" fill="none" stroke="#1a1a1a" stroke-width="1.1" />
<polyline points="456.8,609.5 456.8,625.0" fill="none" stroke="#151515" stroke-width="1.2" />
<polyline points="461.0,611.9 461.0,627.4" fill="none" stroke="#151515" stroke-width="1.2" />
<polyline points="465.2,614.2 465.2,629.7" fill="none" stroke="#151515" stroke-width="1.2" />
<polyline points="455.0,624.0 467.0,630.7" fill="none" stroke="#222" stroke-width="1.1" />
<polyline points="455.0,626.0 467.0,632.7" fill="none" stroke="#6a6a66" stroke-width="1" />
<polygon points="474.0,615.0 487.0,622.3 487.0,642.3 474.0,635.0" fill="#f3f3f3" />
<polygon points="474.0,615.0 487.0,622.3 487.0,625.3 474.0,618.0" fill="#b9b9b5" />
<polyline points="474.5,619.0 487.0,626.3" fill="none" stroke="#1a1a1a" stroke-width="1.1" />
<polyline points="475.9,619.6 475.9,635.1" fill="none" stroke="#151515" stroke-width="1.2" />
<polyline points="480.5,622.1 480.5,637.6" fill="none" stroke="#151515" stroke-width="1.2" />
<polyline points="485.1,624.7 485.1,640.2" fill="none" stroke="#151515" stroke-width="1.2" />
<polyline points="474.0,634.0 487.0,641.3" fill="none" stroke="#222" stroke-width="1.1" />
<polyline points="474.0,636.0 487.0,643.3" fill="none" stroke="#6a6a66" stroke-width="1" />
<polygon points="500.0,631.0 513.0,638.3 513.0,658.3 500.0,651.0" fill="#f3f3f3" />
<polygon points="500.0,631.0 513.0,638.3 513.0,641.3 500.0,634.0" fill="#b9b9b5" />
<polyline points="500.5,635.0 513.0,642.3" fill="none" stroke="#1a1a1a" stroke-width="1.1" />
<polyline points="501.9,635.6 501.9,651.1" fill="none" stroke="#151515" stroke-width="1.2" />
<polyline points="506.5,638.1 506.5,653.6" fill="none" stroke="#151515" stroke-width="1.2" />
<polyline points="511.1,640.7 511.1,656.2" fill="none" stroke="#151515" stroke-width="1.2" />
<polyline points="500.0,650.0 513.0,657.3" fill="none" stroke="#222" stroke-width="1.1" />
<polyline points="500.0,652.0 513.0,659.3" fill="none" stroke="#6a6a66" stroke-width="1" />
<polygon points="533.0,650.0 553.0,661.2 553.0,681.2 533.0,670.0" fill="#f3f3f3" />
<polygon points="533.0,650.0 553.0,661.2 553.0,664.2 533.0,653.0" fill="#b9b9b5" />
<polyline points="533.5,654.0 553.0,665.2" fill="none" stroke="#1a1a1a" stroke-width="1.1" />
<polyline points="535.4,654.8 535.4,670.3" fill="none" stroke="#151515" stroke-width="1.2" />
<polyline points="541.4,658.2 541.4,673.7" fill="none" stroke="#151515" stroke-width="1.2" />
<polyline points="544.6,660.0 544.6,675.5" fill="none" stroke="#151515" stroke-width="1.2" />
<polyline points="550.6,663.4 550.6,678.9" fill="none" stroke="#151515" stroke-width="1.2" />
<polyline points="533.0,669.0 553.0,680.2" fill="none" stroke="#222" stroke-width="1.1" />
<polyline points="533.0,671.0 553.0,682.2" fill="none" stroke="#6a6a66" stroke-width="1" />
<polygon points="364.0,593.0 376.0,599.7 376.0,619.7 364.0,613.0" fill="#f3f3f3" />
<polygon points="364.0,593.0 376.0,599.7 376.0,602.7 364.0,596.0" fill="#b9b9b5" />
<polyline points="364.5,597.0 376.0,603.7" fill="none" stroke="#1a1a1a" stroke-width="1.1" />
<polyline points="365.8,597.5 365.8,613.0" fill="none" stroke="#151515" stroke-width="1.2" />
<polyline points="370.0,599.9 370.0,615.4" fill="none" stroke="#151515" stroke-width="1.2" />
<polyline points="374.2,602.2 374.2,617.7" fill="none" stroke="#151515" stroke-width="1.2" />
<polyline points="364.0,612.0 376.0,618.7" fill="none" stroke="#222" stroke-width="1.1" />
<polyline points="364.0,614.0 376.0,620.7" fill="none" stroke="#6a6a66" stroke-width="1" />
<polygon points="383.0,605.0 395.0,611.7 395.0,631.7 383.0,625.0" fill="#f3f3f3" />
<polygon points="383.0,605.0 395.0,611.7 395.0,614.7 383.0,608.0" fill="#b9b9b5" />
<polyline points="383.5,609.0 395.0,615.7" fill="none" stroke="#1a1a1a" stroke-width="1.1" />
<polyline points="384.8,609.5 384.8,625.0" fill="none" stroke="#151515" stroke-width="1.2" />
<polyline points="389.0,611.9 389.0,627.4" fill="none" stroke="#151515" stroke-width="1.2" />
<polyline points="393.2,614.2 393.2,629.7" fill="none" stroke="#151515" stroke-width="1.2" />
<polyline points="383.0,624.0 395.0,630.7" fill="none" stroke="#222" stroke-width="1.1" />
<polyline points="383.0,626.0 395.0,632.7" fill="none" stroke="#6a6a66" stroke-width="1" />
<polygon points="404.0,617.0 412.0,621.5 412.0,641.5 404.0,637.0" fill="#f3f3f3" />
<polygon points="404.0,617.0 412.0,621.5 412.0,624.5 404.0,620.0" fill="#b9b9b5" />
<polyline points="404.5,621.0 412.0,625.5" fill="none" stroke="#1a1a1a" stroke-width="1.1" />
<polyline points="405.6,621.4 405.6,636.9" fill="none" stroke="#151515" stroke-width="1.2" />
<polyline points="410.4,624.1 410.4,639.6" fill="none" stroke="#151515" stroke-width="1.2" />
<polyline points="404.0,636.0 412.0,640.5" fill="none" stroke="#222" stroke-width="1.1" />
<polyline points="404.0,638.0 412.0,642.5" fill="none" stroke="#6a6a66" stroke-width="1" />
<polygon points="425.0,629.0 437.0,635.7 437.0,655.7 425.0,649.0" fill="#f3f3f3" />
<polygon points="425.0,629.0 437.0,635.7 437.0,638.7 425.0,632.0" fill="#b9b9b5" />
<polyline points="425.5,633.0 437.0,639.7" fill="none" stroke="#1a1a1a" stroke-width="1.1" />
<polyline points="426.8,633.5 426.8,649.0" fill="none" stroke="#151515" stroke-width="1.2" />
<polyline points="431.0,635.9 431.0,651.4" fill="none" stroke="#151515" stroke-width="1.2" />
<polyline points="435.2,638.2 435.2,653.7" fill="none" stroke="#151515" stroke-width="1.2" />
<polyline points="425.0,648.0 437.0,654.7" fill="none" stroke="#222" stroke-width="1.1" />
<polyline points="425.0,650.0 437.0,656.7" fill="none" stroke="#6a6a66" stroke-width="1" />
<polygon points="455.0,645.0 467.0,651.7 467.0,671.7 455.0,665.0" fill="#f3f3f3" />
<polygon points="455.0,645.0 467.0,651.7 467.0,654.7 455.0,648.0" fill="#b9b9b5" />
<polyline points="455.5,649.0 467.0,655.7" fill="none" stroke="#1a1a1a" stroke-width="1.1" />
<polyline points="456.8,649.5 456.8,665.0" fill="none" stroke="#151515" stroke-width="1.2" />
<polyline points="461.0,651.9 461.0,667.4" fill="none" stroke="#151515" stroke-width="1.2" />
<polyline points="465.2,654.2 465.2,669.7" fill="none" stroke="#151515" stroke-width="1.2" />
<polyline points="455.0,664.0 467.0,670.7" fill="none" stroke="#222" stroke-width="1.1" />
<polyline points="455.0,666.0 467.0,672.7" fill="none" stroke="#6a6a66" stroke-width="1" />
<polygon points="474.0,659.0 487.0,666.3 487.0,686.3 474.0,679.0" fill="#f3f3f3" />
<polygon points="474.0,659.0 487.0,666.3 487.0,669.3 474.0,662.0" fill="#b9b9b5" />
<polyline points="474.5,663.0 487.0,670.3" fill="none" stroke="#1a1a1a" stroke-width="1.1" />
<polyline points="475.9,663.6 475.9,679.1" fill="none" stroke="#151515" stroke-width="1.2" />
<polyline points="480.5,666.1 480.5,681.6" fill="none" stroke="#151515" stroke-width="1.2" />
<polyline points="485.1,668.7 485.1,684.2" fill="none" stroke="#151515" stroke-width="1.2" />
<polyline points="474.0,678.0 487.0,685.3" fill="none" stroke="#222" stroke-width="1.1" />
<polyline points="474.0,680.0 487.0,687.3" fill="none" stroke="#6a6a66" stroke-width="1" />
<polygon points="500.0,673.0 513.0,680.3 513.0,700.3 500.0,693.0" fill="#f3f3f3" />
<polygon points="500.0,673.0 513.0,680.3 513.0,683.3 500.0,676.0" fill="#b9b9b5" />
<polyline points="500.5,677.0 513.0,684.3" fill="none" stroke="#1a1a1a" stroke-width="1.1" />
<polyline points="501.9,677.6 501.9,693.1" fill="none" stroke="#151515" stroke-width="1.2" />
<polyline points="506.5,680.1 506.5,695.6" fill="none" stroke="#151515" stroke-width="1.2" />
<polyline points="511.1,682.7 511.1,698.2" fill="none" stroke="#151515" stroke-width="1.2" />
<polyline points="500.0,692.0 513.0,699.3" fill="none" stroke="#222" stroke-width="1.1" />
<polyline points="500.0,694.0 513.0,701.3" fill="none" stroke="#6a6a66" stroke-width="1" />
<polygon points="610.0,666.0 629.0,676.6 629.0,686.6 610.0,676.0" fill="#f3f3f3" />
<polygon points="610.0,666.0 629.0,676.6 629.0,679.6 610.0,669.0" fill="#b9b9b5" />
<polyline points="610.5,670.0 629.0,680.6" fill="none" stroke="#1a1a1a" stroke-width="1.1" />
<polyline points="612.3,670.8 612.3,676.3" fill="none" stroke="#151515" stroke-width="1.2" />
<polyline points="618.0,674.0 618.0,679.5" fill="none" stroke="#151515" stroke-width="1.2" />
<polyline points="621.0,675.7 621.0,681.2" fill="none" stroke="#151515" stroke-width="1.2" />
<polyline points="626.7,678.9 626.7,684.4" fill="none" stroke="#151515" stroke-width="1.2" />
<polyline points="610.0,675.0 629.0,685.6" fill="none" stroke="#222" stroke-width="1.1" />
<polyline points="610.0,677.0 629.0,687.6" fill="none" stroke="#6a6a66" stroke-width="1" />
<polygon points="638.0,681.0 657.0,691.6 657.0,701.6 638.0,691.0" fill="#f3f3f3" />
<polygon points="638.0,681.0 657.0,691.6 657.0,694.6 638.0,684.0" fill="#b9b9b5" />
<polyline points="638.5,685.0 657.0,695.6" fill="none" stroke="#1a1a1a" stroke-width="1.1" />
<polyline points="640.3,685.8 640.3,691.3" fill="none" stroke="#151515" stroke-width="1.2" />
<polyline points="646.0,689.0 646.0,694.5" fill="none" stroke="#151515" stroke-width="1.2" />
<polyline points="649.0,690.7 649.0,696.2" fill="none" stroke="#151515" stroke-width="1.2" />
<polyline points="654.7,693.9 654.7,699.4" fill="none" stroke="#151515" stroke-width="1.2" />
<polyline points="638.0,690.0 657.0,700.6" fill="none" stroke="#222" stroke-width="1.1" />
<polyline points="638.0,692.0 657.0,702.6" fill="none" stroke="#6a6a66" stroke-width="1" />
<polygon points="675.0,702.0 694.0,712.6 694.0,722.6 675.0,712.0" fill="#f3f3f3" />
<polygon points="675.0,702.0 694.0,712.6 694.0,715.6 675.0,705.0" fill="#b9b9b5" />
<polyline points="675.5,706.0 694.0,716.6" fill="none" stroke="#1a1a1a" stroke-width="1.1" />
<polyline points="677.3,706.8 677.3,712.3" fill="none" stroke="#151515" stroke-width="1.2" />
<polyline points="683.0,710.0 683.0,715.5" fill="none" stroke="#151515" stroke-width="1.2" />
<polyline points="686.0,711.7 686.0,717.2" fill="none" stroke="#151515" stroke-width="1.2" />
<polyline points="691.7,714.9 691.7,720.4" fill="none" stroke="#151515" stroke-width="1.2" />
<polyline points="675.0,711.0 694.0,721.6" fill="none" stroke="#222" stroke-width="1.1" />
<polyline points="675.0,713.0 694.0,723.6" fill="none" stroke="#6a6a66" stroke-width="1" />
<polygon points="579.0,680.0 598.0,690.6 598.0,710.6 579.0,700.0" fill="#f3f3f3" />
<polygon points="579.0,680.0 598.0,690.6 598.0,693.6 579.0,683.0" fill="#b9b9b5" />
<polyline points="579.5,684.0 598.0,694.6" fill="none" stroke="#1a1a1a" stroke-width="1.1" />
<polyline points="581.3,684.8 581.3,700.3" fill="none" stroke="#151515" stroke-width="1.2" />
<polyline points="587.0,688.0 587.0,703.5" fill="none" stroke="#151515" stroke-width="1.2" />
<polyline points="590.0,689.7 590.0,705.2" fill="none" stroke="#151515" stroke-width="1.2" />
<polyline points="595.7,692.9 595.7,708.4" fill="none" stroke="#151515" stroke-width="1.2" />
<polyline points="579.0,699.0 598.0,709.6" fill="none" stroke="#222" stroke-width="1.1" />
<polyline points="579.0,701.0 598.0,711.6" fill="none" stroke="#6a6a66" stroke-width="1" />
<polygon points="611.0,695.0 630.0,705.6 630.0,725.6 611.0,715.0" fill="#f3f3f3" />
<polygon points="611.0,695.0 630.0,705.6 630.0,708.6 611.0,698.0" fill="#b9b9b5" />
<polyline points="611.5,699.0 630.0,709.6" fill="none" stroke="#1a1a1a" stroke-width="1.1" />
<polyline points="613.3,699.8 613.3,715.3" fill="none" stroke="#151515" stroke-width="1.2" />
<polyline points="619.0,703.0 619.0,718.5" fill="none" stroke="#151515" stroke-width="1.2" />
<polyline points="622.0,704.7 622.0,720.2" fill="none" stroke="#151515" stroke-width="1.2" />
<polyline points="627.7,707.9 627.7,723.4" fill="none" stroke="#151515" stroke-width="1.2" />
<polyline points="611.0,714.0 630.0,724.6" fill="none" stroke="#222" stroke-width="1.1" />
<polyline points="611.0,716.0 630.0,726.6" fill="none" stroke="#6a6a66" stroke-width="1" />
<polygon points="639.0,711.0 658.0,721.6 658.0,741.6 639.0,731.0" fill="#f3f3f3" />
<polygon points="639.0,711.0 658.0,721.6 658.0,724.6 639.0,714.0" fill="#b9b9b5" />
<polyline points="639.5,715.0 658.0,725.6" fill="none" stroke="#1a1a1a" stroke-width="1.1" />
<polyline points="641.3,715.8 641.3,731.3" fill="none" stroke="#151515" stroke-width="1.2" />
<polyline points="647.0,719.0 647.0,734.5" fill="none" stroke="#151515" stroke-width="1.2" />
<polyline points="650.0,720.7 650.0,736.2" fill="none" stroke="#151515" stroke-width="1.2" />
<polyline points="655.7,723.9 655.7,739.4" fill="none" stroke="#151515" stroke-width="1.2" />
<polyline points="639.0,730.0 658.0,740.6" fill="none" stroke="#222" stroke-width="1.1" />
<polyline points="639.0,732.0 658.0,742.6" fill="none" stroke="#6a6a66" stroke-width="1" />
<polygon points="675.0,728.0 694.0,738.6 694.0,758.6 675.0,748.0" fill="#f3f3f3" />
<polygon points="675.0,728.0 694.0,738.6 694.0,741.6 675.0,731.0" fill="#b9b9b5" />
<polyline points="675.5,732.0 694.0,742.6" fill="none" stroke="#1a1a1a" stroke-width="1.1" />
<polyline points="677.3,732.8 677.3,748.3" fill="none" stroke="#151515" stroke-width="1.2" />
<polyline points="683.0,736.0 683.0,751.5" fill="none" stroke="#151515" stroke-width="1.2" />
<polyline points="686.0,737.7 686.0,753.2" fill="none" stroke="#151515" stroke-width="1.2" />
<polyline points="691.7,740.9 691.7,756.4" fill="none" stroke="#151515" stroke-width="1.2" />
<polyline points="675.0,747.0 694.0,757.6" fill="none" stroke="#222" stroke-width="1.1" />
<polyline points="675.0,749.0 694.0,759.6" fill="none" stroke="#6a6a66" stroke-width="1" />
<polygon points="579.0,720.0 598.0,730.6 598.0,750.6 579.0,740.0" fill="#f3f3f3" />
<polygon points="579.0,720.0 598.0,730.6 598.0,733.6 579.0,723.0" fill="#b9b9b5" />
<polyline points="579.5,724.0 598.0,734.6" fill="none" stroke="#1a1a1a" stroke-width="1.1" />
<polyline points="581.3,724.8 581.3,740.3" fill="none" stroke="#151515" stroke-width="1.2" />
<polyline points="587.0,728.0 587.0,743.5" fill="none" stroke="#151515" stroke-width="1.2" />
<polyline points="590.0,729.7 590.0,745.2" fill="none" stroke="#151515" stroke-width="1.2" />
<polyline points="595.7,732.9 595.7,748.4" fill="none" stroke="#151515" stroke-width="1.2" />
<polyline points="579.0,739.0 598.0,749.6" fill="none" stroke="#222" stroke-width="1.1" />
<polyline points="579.0,741.0 598.0,751.6" fill="none" stroke="#6a6a66" stroke-width="1" />
<polygon points="611.0,737.0 630.0,747.6 630.0,767.6 611.0,757.0" fill="#f3f3f3" />
<polygon points="611.0,737.0 630.0,747.6 630.0,750.6 611.0,740.0" fill="#b9b9b5" />
<polyline points="611.5,741.0 630.0,751.6" fill="none" stroke="#1a1a1a" stroke-width="1.1" />
<polyline points="613.3,741.8 613.3,757.3" fill="none" stroke="#151515" stroke-width="1.2" />
<polyline points="619.0,745.0 619.0,760.5" fill="none" stroke="#151515" stroke-width="1.2" />
<polyline points="622.0,746.7 622.0,762.2" fill="none" stroke="#151515" stroke-width="1.2" />
<polyline points="627.7,749.9 627.7,765.4" fill="none" stroke="#151515" stroke-width="1.2" />
<polyline points="611.0,756.0 630.0,766.6" fill="none" stroke="#222" stroke-width="1.1" />
<polyline points="611.0,758.0 630.0,768.6" fill="none" stroke="#6a6a66" stroke-width="1" />
<polygon points="639.0,753.0 658.0,763.6 658.0,783.6 639.0,773.0" fill="#f3f3f3" />
<polygon points="639.0,753.0 658.0,763.6 658.0,766.6 639.0,756.0" fill="#b9b9b5" />
<polyline points="639.5,757.0 658.0,767.6" fill="none" stroke="#1a1a1a" stroke-width="1.1" />
<polyline points="641.3,757.8 641.3,773.3" fill="none" stroke="#151515" stroke-width="1.2" />
<polyline points="647.0,761.0 647.0,776.5" fill="none" stroke="#151515" stroke-width="1.2" />
<polyline points="650.0,762.7 650.0,778.2" fill="none" stroke="#151515" stroke-width="1.2" />
<polyline points="655.7,765.9 655.7,781.4" fill="none" stroke="#151515" stroke-width="1.2" />
<polyline points="639.0,772.0 658.0,782.6" fill="none" stroke="#222" stroke-width="1.1" />
<polyline points="639.0,774.0 658.0,784.6" fill="none" stroke="#6a6a66" stroke-width="1" />
<polygon points="675.0,773.0 694.0,783.6 694.0,803.6 675.0,793.0" fill="#f3f3f3" />
<polygon points="675.0,773.0 694.0,783.6 694.0,786.6 675.0,776.0" fill="#b9b9b5" />
<polyline points="675.5,777.0 694.0,787.6" fill="none" stroke="#1a1a1a" stroke-width="1.1" />
<polyline points="677.3,777.8 677.3,793.3" fill="none" stroke="#151515" stroke-width="1.2" />
<polyline points="683.0,781.0 683.0,796.5" fill="none" stroke="#151515" stroke-width="1.2" />
<polyline points="686.0,782.7 686.0,798.2" fill="none" stroke="#151515" stroke-width="1.2" />
<polyline points="691.7,785.9 691.7,801.4" fill="none" stroke="#151515" stroke-width="1.2" />
<polyline points="675.0,792.0 694.0,802.6" fill="none" stroke="#222" stroke-width="1.1" />
<polyline points="675.0,794.0 694.0,804.6" fill="none" stroke="#6a6a66" stroke-width="1" />
<polygon points="713.0,712.0 732.0,701.0 732.0,711.0 713.0,722.0" fill="#d9d9d5" />
<polyline points="713.5,715.0 732.0,704.0" fill="none" stroke="#1a1a1a" stroke-width="1.1" />
<polyline points="714.9,712.9 714.9,720.9" fill="none" stroke="#151515" stroke-width="1.3" />
<polyline points="720.6,709.6 720.6,717.6" fill="none" stroke="#151515" stroke-width="1.3" />
<polyline points="724.4,707.4 724.4,715.4" fill="none" stroke="#151515" stroke-width="1.3" />
<polyline points="730.1,704.1 730.1,712.1" fill="none" stroke="#151515" stroke-width="1.3" />
<polyline points="713.0,720.0 732.0,709.0" fill="none" stroke="#1a1a1a" stroke-width="1.2" />
<polyline points="713.0,722.5 732.0,711.5" fill="none" stroke="#777" stroke-width="1" />
<polygon points="740.0,697.0 759.0,686.0 759.0,696.0 740.0,707.0" fill="#d9d9d5" />
<polyline points="740.5,700.0 759.0,689.0" fill="none" stroke="#1a1a1a" stroke-width="1.1" />
<polyline points="741.9,697.9 741.9,705.9" fill="none" stroke="#151515" stroke-width="1.3" />
<polyline points="747.6,694.6 747.6,702.6" fill="none" stroke="#151515" stroke-width="1.3" />
<polyline points="751.4,692.4 751.4,700.4" fill="none" stroke="#151515" stroke-width="1.3" />
<polyline points="757.1,689.1 757.1,697.1" fill="none" stroke="#151515" stroke-width="1.3" />
<polyline points="740.0,705.0 759.0,694.0" fill="none" stroke="#1a1a1a" stroke-width="1.2" />
<polyline points="740.0,707.5 759.0,696.5" fill="none" stroke="#777" stroke-width="1" />
<polygon points="770.0,680.0 782.0,673.0 782.0,683.0 770.0,690.0" fill="#d9d9d5" />
<polyline points="770.5,683.0 782.0,676.0" fill="none" stroke="#1a1a1a" stroke-width="1.1" />
<polyline points="772.4,680.6 772.4,688.6" fill="none" stroke="#151515" stroke-width="1.3" />
<polyline points="779.6,676.4 779.6,684.4" fill="none" stroke="#151515" stroke-width="1.3" />
<polyline points="770.0,688.0 782.0,681.0" fill="none" stroke="#1a1a1a" stroke-width="1.2" />
<polyline points="770.0,690.5 782.0,683.5" fill="none" stroke="#777" stroke-width="1" />
<polygon points="791.0,669.0 803.0,662.0 803.0,672.0 791.0,679.0" fill="#d9d9d5" />
<polyline points="791.5,672.0 803.0,665.0" fill="none" stroke="#1a1a1a" stroke-width="1.1" />
<polyline points="793.4,669.6 793.4,677.6" fill="none" stroke="#151515" stroke-width="1.3" />
<polyline points="800.6,665.4 800.6,673.4" fill="none" stroke="#151515" stroke-width="1.3" />
<polyline points="791.0,677.0 803.0,670.0" fill="none" stroke="#1a1a1a" stroke-width="1.2" />
<polyline points="791.0,679.5 803.0,672.5" fill="none" stroke="#777" stroke-width="1" />
<polygon points="813.0,656.0 824.0,649.6 824.0,659.6 813.0,666.0" fill="#d9d9d5" />
<polyline points="813.5,659.0 824.0,652.6" fill="none" stroke="#1a1a1a" stroke-width="1.1" />
<polyline points="815.2,656.7 815.2,664.7" fill="none" stroke="#151515" stroke-width="1.3" />
<polyline points="821.8,652.9 821.8,660.9" fill="none" stroke="#151515" stroke-width="1.3" />
<polyline points="813.0,664.0 824.0,657.6" fill="none" stroke="#1a1a1a" stroke-width="1.2" />
<polyline points="813.0,666.5 824.0,660.1" fill="none" stroke="#777" stroke-width="1" />
<polygon points="713.0,744.0 732.0,733.0 732.0,751.0 713.0,762.0" fill="#d9d9d5" />
<polyline points="713.5,747.0 732.0,736.0" fill="none" stroke="#1a1a1a" stroke-width="1.1" />
<polyline points="714.9,744.9 714.9,760.9" fill="none" stroke="#151515" stroke-width="1.3" />
<polyline points="720.6,741.6 720.6,757.6" fill="none" stroke="#151515" stroke-width="1.3" />
<polyline points="724.4,739.4 724.4,755.4" fill="none" stroke="#151515" stroke-width="1.3" />
<polyline points="730.1,736.1 730.1,752.1" fill="none" stroke="#151515" stroke-width="1.3" />
<polyline points="713.0,760.0 732.0,749.0" fill="none" stroke="#1a1a1a" stroke-width="1.2" />
<polyline points="713.0,762.5 732.0,751.5" fill="none" stroke="#777" stroke-width="1" />
<polygon points="740.0,730.0 759.0,719.0 759.0,737.0 740.0,748.0" fill="#d9d9d5" />
<polyline points="740.5,733.0 759.0,722.0" fill="none" stroke="#1a1a1a" stroke-width="1.1" />
<polyline points="741.9,730.9 741.9,746.9" fill="none" stroke="#151515" stroke-width="1.3" />
<polyline points="747.6,727.6 747.6,743.6" fill="none" stroke="#151515" stroke-width="1.3" />
<polyline points="751.4,725.4 751.4,741.4" fill="none" stroke="#151515" stroke-width="1.3" />
<polyline points="757.1,722.1 757.1,738.1" fill="none" stroke="#151515" stroke-width="1.3" />
<polyline points="740.0,746.0 759.0,735.0" fill="none" stroke="#1a1a1a" stroke-width="1.2" />
<polyline points="740.0,748.5 759.0,737.5" fill="none" stroke="#777" stroke-width="1" />
<polygon points="770.0,712.0 782.0,705.0 782.0,723.0 770.0,730.0" fill="#d9d9d5" />
<polyline points="770.5,715.0 782.0,708.0" fill="none" stroke="#1a1a1a" stroke-width="1.1" />
<polyline points="772.4,712.6 772.4,728.6" fill="none" stroke="#151515" stroke-width="1.3" />
<polyline points="779.6,708.4 779.6,724.4" fill="none" stroke="#151515" stroke-width="1.3" />
<polyline points="770.0,728.0 782.0,721.0" fill="none" stroke="#1a1a1a" stroke-width="1.2" />
<polyline points="770.0,730.5 782.0,723.5" fill="none" stroke="#777" stroke-width="1" />
<polygon points="791.0,701.0 803.0,694.0 803.0,712.0 791.0,719.0" fill="#d9d9d5" />
<polyline points="791.5,704.0 803.0,697.0" fill="none" stroke="#1a1a1a" stroke-width="1.1" />
<polyline points="793.4,701.6 793.4,717.6" fill="none" stroke="#151515" stroke-width="1.3" />
<polyline points="800.6,697.4 800.6,713.4" fill="none" stroke="#151515" stroke-width="1.3" />
<polyline points="791.0,717.0 803.0,710.0" fill="none" stroke="#1a1a1a" stroke-width="1.2" />
<polyline points="791.0,719.5 803.0,712.5" fill="none" stroke="#777" stroke-width="1" />
<polygon points="813.0,688.0 824.0,681.6 824.0,699.6 813.0,706.0" fill="#d9d9d5" />
<polyline points="813.5,691.0 824.0,684.6" fill="none" stroke="#1a1a1a" stroke-width="1.1" />
<polyline points="815.2,688.7 815.2,704.7" fill="none" stroke="#151515" stroke-width="1.3" />
<polyline points="821.8,684.9 821.8,700.9" fill="none" stroke="#151515" stroke-width="1.3" />
<polyline points="813.0,704.0 824.0,697.6" fill="none" stroke="#1a1a1a" stroke-width="1.2" />
<polyline points="813.0,706.5 824.0,700.1" fill="none" stroke="#777" stroke-width="1" />
<polygon points="713.0,788.0 732.0,777.0 732.0,797.0 713.0,808.0" fill="#f4f4f4" />
<polyline points="713.5,791.0 732.0,780.0" fill="none" stroke="#1a1a1a" stroke-width="1.1" />
<polyline points="714.9,788.9 714.9,806.9" fill="none" stroke="#151515" stroke-width="1.3" />
<polyline points="720.6,785.6 720.6,803.6" fill="none" stroke="#151515" stroke-width="1.3" />
<polyline points="724.4,783.4 724.4,801.4" fill="none" stroke="#151515" stroke-width="1.3" />
<polyline points="730.1,780.1 730.1,798.1" fill="none" stroke="#151515" stroke-width="1.3" />
<polyline points="713.0,806.0 732.0,795.0" fill="none" stroke="#1a1a1a" stroke-width="1.2" />
<polyline points="713.0,808.5 732.0,797.5" fill="none" stroke="#777" stroke-width="1" />
<polygon points="740.0,772.0 759.0,761.0 759.0,781.0 740.0,792.0" fill="#f4f4f4" />
<polyline points="740.5,775.0 759.0,764.0" fill="none" stroke="#1a1a1a" stroke-width="1.1" />
<polyline points="741.9,772.9 741.9,790.9" fill="none" stroke="#151515" stroke-width="1.3" />
<polyline points="747.6,769.6 747.6,787.6" fill="none" stroke="#151515" stroke-width="1.3" />
<polyline points="751.4,767.4 751.4,785.4" fill="none" stroke="#151515" stroke-width="1.3" />
<polyline points="757.1,764.1 757.1,782.1" fill="none" stroke="#151515" stroke-width="1.3" />
<polyline points="740.0,790.0 759.0,779.0" fill="none" stroke="#1a1a1a" stroke-width="1.2" />
<polyline points="740.0,792.5 759.0,781.5" fill="none" stroke="#777" stroke-width="1" />
<polygon points="770.0,754.0 782.0,747.0 782.0,765.0 770.0,772.0" fill="#d9d9d5" />
<polyline points="770.5,757.0 782.0,750.0" fill="none" stroke="#1a1a1a" stroke-width="1.1" />
<polyline points="772.4,754.6 772.4,770.6" fill="none" stroke="#151515" stroke-width="1.3" />
<polyline points="779.6,750.4 779.6,766.4" fill="none" stroke="#151515" stroke-width="1.3" />
<polyline points="770.0,770.0 782.0,763.0" fill="none" stroke="#1a1a1a" stroke-width="1.2" />
<polyline points="770.0,772.5 782.0,765.5" fill="none" stroke="#777" stroke-width="1" />
<polygon points="791.0,740.0 803.0,733.0 803.0,751.0 791.0,758.0" fill="#d9d9d5" />
<polyline points="791.5,743.0 803.0,736.0" fill="none" stroke="#1a1a1a" stroke-width="1.1" />
<polyline points="793.4,740.6 793.4,756.6" fill="none" stroke="#151515" stroke-width="1.3" />
<polyline points="800.6,736.4 800.6,752.4" fill="none" stroke="#151515" stroke-width="1.3" />
<polyline points="791.0,756.0 803.0,749.0" fill="none" stroke="#1a1a1a" stroke-width="1.2" />
<polyline points="791.0,758.5 803.0,751.5" fill="none" stroke="#777" stroke-width="1" />
<polygon points="813.0,730.0 824.0,723.6 824.0,741.6 813.0,748.0" fill="#d9d9d5" />
<polyline points="813.5,733.0 824.0,726.6" fill="none" stroke="#1a1a1a" stroke-width="1.1" />
<polyline points="815.2,730.7 815.2,746.7" fill="none" stroke="#151515" stroke-width="1.3" />
<polyline points="821.8,726.9 821.8,742.9" fill="none" stroke="#151515" stroke-width="1.3" />
<polyline points="813.0,746.0 824.0,739.6" fill="none" stroke="#1a1a1a" stroke-width="1.2" />
<polyline points="813.0,748.5 824.0,742.1" fill="none" stroke="#777" stroke-width="1" />
<polygon points="843.0,594.0 861.0,583.6 861.0,593.6 843.0,604.0" fill="#d9d9d5" />
<polyline points="843.5,597.0 861.0,586.6" fill="none" stroke="#1a1a1a" stroke-width="1.1" />
<polyline points="844.8,595.0 844.8,603.0" fill="none" stroke="#151515" stroke-width="1.3" />
<polyline points="850.2,591.8 850.2,599.8" fill="none" stroke="#151515" stroke-width="1.3" />
<polyline points="853.8,589.7 853.8,597.7" fill="none" stroke="#151515" stroke-width="1.3" />
<polyline points="859.2,586.6 859.2,594.6" fill="none" stroke="#151515" stroke-width="1.3" />
<polyline points="843.0,602.0 861.0,591.6" fill="none" stroke="#1a1a1a" stroke-width="1.2" />
<polyline points="843.0,604.5 861.0,594.1" fill="none" stroke="#777" stroke-width="1" />
<polygon points="843.0,626.0 861.0,615.6 861.0,633.6 843.0,644.0" fill="#d9d9d5" />
<polyline points="843.5,629.0 861.0,618.6" fill="none" stroke="#1a1a1a" stroke-width="1.1" />
<polyline points="844.8,627.0 844.8,643.0" fill="none" stroke="#151515" stroke-width="1.3" />
<polyline points="850.2,623.8 850.2,639.8" fill="none" stroke="#151515" stroke-width="1.3" />
<polyline points="853.8,621.7 853.8,637.7" fill="none" stroke="#151515" stroke-width="1.3" />
<polyline points="859.2,618.6 859.2,634.6" fill="none" stroke="#151515" stroke-width="1.3" />
<polyline points="843.0,642.0 861.0,631.6" fill="none" stroke="#1a1a1a" stroke-width="1.2" />
<polyline points="843.0,644.5 861.0,634.1" fill="none" stroke="#777" stroke-width="1" />
<polygon points="810.0,611.0 822.0,604.0 822.0,612.0 810.0,619.0" fill="#d9d9d5" />
<polyline points="810.5,614.0 822.0,607.0" fill="none" stroke="#1a1a1a" stroke-width="1.1" />
<polyline points="812.4,611.6 812.4,617.6" fill="none" stroke="#151515" stroke-width="1.3" />
<polyline points="819.6,607.4 819.6,613.4" fill="none" stroke="#151515" stroke-width="1.3" />
<polyline points="810.0,617.0 822.0,610.0" fill="none" stroke="#1a1a1a" stroke-width="1.2" />
<polyline points="810.0,619.5 822.0,612.5" fill="none" stroke="#777" stroke-width="1" />
<polygon points="878.0,606.0 896.0,595.6 896.0,613.6 878.0,624.0" fill="#d9d9d5" />
<polyline points="878.5,609.0 896.0,598.6" fill="none" stroke="#1a1a1a" stroke-width="1.1" />
<polyline points="879.8,607.0 879.8,623.0" fill="none" stroke="#151515" stroke-width="1.3" />
<polyline points="885.2,603.8 885.2,619.8" fill="none" stroke="#151515" stroke-width="1.3" />
<polyline points="888.8,601.7 888.8,617.7" fill="none" stroke="#151515" stroke-width="1.3" />
<polyline points="894.2,598.6 894.2,614.6" fill="none" stroke="#151515" stroke-width="1.3" />
<polyline points="878.0,622.0 896.0,611.6" fill="none" stroke="#1a1a1a" stroke-width="1.2" />
<polyline points="878.0,624.5 896.0,614.1" fill="none" stroke="#777" stroke-width="1" />
<polygon points="917.0,676.0 933.0,666.7 933.0,684.7 917.0,694.0" fill="#d9d9d5" />
<polyline points="917.5,679.0 933.0,669.7" fill="none" stroke="#1a1a1a" stroke-width="1.1" />
<polyline points="918.6,677.1 918.6,693.1" fill="none" stroke="#151515" stroke-width="1.3" />
<polyline points="923.4,674.3 923.4,690.3" fill="none" stroke="#151515" stroke-width="1.3" />
<polyline points="926.6,672.4 926.6,688.4" fill="none" stroke="#151515" stroke-width="1.3" />
<polyline points="931.4,669.6 931.4,685.6" fill="none" stroke="#151515" stroke-width="1.3" />
<polyline points="917.0,692.0 933.0,682.7" fill="none" stroke="#1a1a1a" stroke-width="1.2" />
<polyline points="917.0,694.5 933.0,685.2" fill="none" stroke="#777" stroke-width="1" />
<polygon points="955.0,655.0 971.0,645.7 971.0,663.7 955.0,673.0" fill="#d9d9d5" />
<polyline points="955.5,658.0 971.0,648.7" fill="none" stroke="#1a1a1a" stroke-width="1.1" />
<polyline points="956.6,656.1 956.6,672.1" fill="none" stroke="#151515" stroke-width="1.3" />
<polyline points="961.4,653.3 961.4,669.3" fill="none" stroke="#151515" stroke-width="1.3" />
<polyline points="964.6,651.4 964.6,667.4" fill="none" stroke="#151515" stroke-width="1.3" />
<polyline points="969.4,648.6 969.4,664.6" fill="none" stroke="#151515" stroke-width="1.3" />
<polyline points="955.0,671.0 971.0,661.7" fill="none" stroke="#1a1a1a" stroke-width="1.2" />
<polyline points="955.0,673.5 971.0,664.2" fill="none" stroke="#777" stroke-width="1" />
<polygon points="988.0,637.0 1004.0,627.7 1004.0,645.7 988.0,655.0" fill="#d9d9d5" />
<polyline points="988.5,640.0 1004.0,630.7" fill="none" stroke="#1a1a1a" stroke-width="1.1" />
<polyline points="989.6,638.1 989.6,654.1" fill="none" stroke="#151515" stroke-width="1.3" />
<polyline points="994.4,635.3 994.4,651.3" fill="none" stroke="#151515" stroke-width="1.3" />
<polyline points="997.6,633.4 997.6,649.4" fill="none" stroke="#151515" stroke-width="1.3" />
<polyline points="1002.4,630.6 1002.4,646.6" fill="none" stroke="#151515" stroke-width="1.3" />
<polyline points="988.0,653.0 1004.0,643.7" fill="none" stroke="#1a1a1a" stroke-width="1.2" />
<polyline points="988.0,655.5 1004.0,646.2" fill="none" stroke="#777" stroke-width="1" />
<polygon points="1020.0,619.0 1036.0,609.7 1036.0,627.7 1020.0,637.0" fill="#d9d9d5" />
<polyline points="1020.5,622.0 1036.0,612.7" fill="none" stroke="#1a1a1a" stroke-width="1.1" />
<polyline points="1021.6,620.1 1021.6,636.1" fill="none" stroke="#151515" stroke-width="1.3" />
<polyline points="1026.4,617.3 1026.4,633.3" fill="none" stroke="#151515" stroke-width="1.3" />
<polyline points="1029.6,615.4 1029.6,631.4" fill="none" stroke="#151515" stroke-width="1.3" />
<polyline points="1034.4,612.6 1034.4,628.6" fill="none" stroke="#151515" stroke-width="1.3" />
<polyline points="1020.0,635.0 1036.0,625.7" fill="none" stroke="#1a1a1a" stroke-width="1.2" />
<polyline points="1020.0,637.5 1036.0,628.2" fill="none" stroke="#777" stroke-width="1" />
<polygon points="808.0,608.0 822.0,599.9 822.0,609.9 808.0,618.0" fill="#d9d9d5" />
<polyline points="808.5,611.0 822.0,602.9" fill="none" stroke="#1a1a1a" stroke-width="1.1" />
<polyline points="810.8,608.4 810.8,616.4" fill="none" stroke="#151515" stroke-width="1.3" />
<polyline points="819.2,603.5 819.2,611.5" fill="none" stroke="#151515" stroke-width="1.3" />
<polyline points="808.0,616.0 822.0,607.9" fill="none" stroke="#1a1a1a" stroke-width="1.2" />
<polyline points="808.0,618.5 822.0,610.4" fill="none" stroke="#777" stroke-width="1" />
<polygon points="505.0,602.0 646.0,521.0 672.0,535.0 730.0,498.0 709.0,484.0 847.0,402.0 825.0,389.0 903.0,344.0 926.0,356.0 951.0,344.0 972.0,355.0 1003.0,338.0 1158.0,428.0 1131.0,446.0 1147.0,458.0 1126.0,470.0 1171.0,498.0 1093.0,544.0 1047.0,520.0 907.0,599.0 868.0,577.0 806.0,612.0 844.0,634.0 703.0,715.0" fill="#f4863a" />
<polygon points="505.0,602.0 646.0,521.0 647.0,564.0" fill="#db7531" />
<polygon points="646.0,521.0 844.0,634.0 703.0,597.0 647.0,564.0" fill="#985220" />
<polygon points="825.0,389.0 903.0,344.0 903.0,368.0" fill="#db7531" />
<polygon points="903.0,344.0 926.0,356.0 926.0,380.0 903.0,368.0" fill="#985220" />
<polygon points="926.0,356.0 951.0,344.0 951.0,404.0 926.0,380.0" fill="#db7531" />
<polygon points="951.0,344.0 972.0,355.0 972.0,404.0 951.0,404.0" fill="#985220" />
<polygon points="972.0,355.0 1003.0,338.0 1003.0,386.0 972.0,404.0" fill="#db7531" />
<polygon points="1003.0,338.0 1158.0,428.0 1003.0,386.0" fill="#985220" />
<polygon points="951.0,404.0 972.0,404.0 1128.0,445.0 1147.0,457.0 1122.0,451.0 951.0,406.5" fill="#985220" />
<polygon points="847.0,402.0 926.0,380.0 951.0,404.0 928.0,418.0 909.0,430.0 709.0,483.0" fill="#db7531" />
<polygon points="671.0,535.0 731.0,498.5 866.0,463.0 793.0,505.0 671.0,538.0" fill="#db7531" />
<polygon points="1046.0,450.0 1171.0,498.0 1123.0,471.0" fill="#985220" />
<polyline points="1158.0,428.0 1131.0,446.0" fill="none" stroke="#c9c9c9" stroke-width="1.5" />
<polyline points="1171.0,498.0 1093.0,544.0" fill="none" stroke="#d0d0d0" stroke-width="1.2" />
<polyline points="929.0,418.0 1047.0,450.0" fill="none" stroke="#8a4a1c" stroke-width="0.9" stroke-dasharray="4,2"/>
<ellipse cx="876" cy="410" rx="5.5" ry="2.6" fill="#e8eef5" transform="rotate(-20 876 410)"/>
<ellipse cx="876" cy="410" rx="3.8" ry="1.6" fill="#2d5a9a" transform="rotate(-20 876 410)"/>
<ellipse cx="888" cy="408" rx="5.5" ry="2.6" fill="#e8eef5" transform="rotate(-20 888 408)"/>
<ellipse cx="888" cy="408" rx="3.8" ry="1.6" fill="#2d5a9a" transform="rotate(-20 888 408)"/>
<ellipse cx="857" cy="423" rx="5.5" ry="2.6" fill="#e8eef5" transform="rotate(-20 857 423)"/>
<ellipse cx="857" cy="423" rx="3.8" ry="1.6" fill="#2d5a9a" transform="rotate(-20 857 423)"/>
<ellipse cx="871" cy="422" rx="5.5" ry="2.6" fill="#e8eef5" transform="rotate(-20 871 422)"/>
<ellipse cx="871" cy="422" rx="3.8" ry="1.6" fill="#2d5a9a" transform="rotate(-20 871 422)"/></svg></div>

<!-- right panel -->
<div class="a" style="left:1319px;top:155px;width:1.8px;height:736px;background:#8c8c8c"></div>
<div class="hdr" style="left:1320px;top:131px;width:328px;height:23.5px;font-size:11px">Properties</div>
<div class="a" style="left:1320px;top:154.5px;width:328px;height:2.5px;background:#a9a9a9"></div>
<svg class="a" style="left:1320px;top:157px" width="20" height="40" shape-rendering="crispEdges">
 <line x1="5.5" y1="0" x2="5.5" y2="30" stroke="#d0d0d0" stroke-dasharray="1,1"/>
 <rect x="2" y="5" width="7" height="7" fill="#fafafa" stroke="#e4e4e4"/>
 <line x1="3" y1="8.5" x2="8" y2="8.5" stroke="#111" stroke-width="1.1"/>
 <line x1="5.5" y1="6" x2="5.5" y2="11" stroke="#111" stroke-width="1.1"/>
 <rect x="2" y="22" width="7" height="7" fill="#fafafa" stroke="#e4e4e4"/>
 <line x1="3" y1="25.5" x2="8" y2="25.5" stroke="#111" stroke-width="1.1"/>
 <line x1="5.5" y1="23" x2="5.5" y2="28" stroke="#111" stroke-width="1.1"/>
</svg>
<div class="t" style="left:1335px;top:159px;font-size:10px;font-weight:bold;color:#1a1a1a">File Header</div>
<div class="t" style="left:1335px;top:176.5px;font-size:10px;font-weight:bold;color:#1a1a1a">File Data</div>


<svg class="a" style="left:1190px;top:150px" width="130" height="120" viewBox="1190 150 130 120">
 <polygon points="1252.9,158 1299.9,182 1253.7,207.7 1207.9,181.5" fill="#c9c9c9" stroke="#4a4a4a" stroke-width="1"/>
 <polygon points="1207.9,181.5 1253.7,207.7 1253.7,261.5 1210.6,234" fill="#c6c6c6" stroke="#4a4a4a" stroke-width="1"/>
 <polygon points="1253.7,207.7 1299.9,182 1297.6,234 1253.7,261.5" fill="#c6c6c6" stroke="#4a4a4a" stroke-width="1"/>
  <text x="0" y="0" font-family="Liberation Sans" font-size="12.5" fill="#4a4a4a" stroke="#4a4a4a" stroke-width="0.3" transform="translate(1243,190) rotate(-32)">Top</text>
 <text x="0" y="0" font-family="Liberation Sans" font-size="12.5" fill="#4a4a4a" stroke="#4a4a4a" stroke-width="0.3" transform="translate(1220,220) skewY(30) scale(0.95,1.15)">Left</text>
 <text x="0" y="0" font-family="Liberation Sans" font-size="12.5" fill="#4a4a4a" stroke="#4a4a4a" stroke-width="0.3" transform="translate(1264,234) skewY(-30) skewX(10) scale(0.95,1.15)">Front</text>
</svg>
<svg class="a" style="left:260px;top:770px" width="110" height="70" viewBox="260 770 110 70">
 <defs>
  <linearGradient id="gz" x1="0" x2="1"><stop offset="0" stop-color="#5a78ff"/><stop offset="0.5" stop-color="#2a44e0"/><stop offset="1" stop-color="#1a2aa0"/></linearGradient>
 </defs>
 <path d="M316,828 L290,813" stroke="#2a9a2a" stroke-width="6.5" stroke-linecap="round"/>
 <path d="M316,826 L290,811" stroke="#4ad04a" stroke-width="2.5" stroke-linecap="round"/>
 <path d="M284,809 Q286,805 292,806 L297,808 Q296,815 292,819 Q286,818 284,809 Z" fill="#38c038"/>
 <path d="M316,828 L342,813" stroke="#b02a1e" stroke-width="6.5" stroke-linecap="round"/>
 <path d="M316,826 L342,811" stroke="#e05040" stroke-width="2.5" stroke-linecap="round"/>
 <path d="M337,808 L343,805 Q348,806 349,810 Q347,817 343,819 Q338,815 337,808 Z" fill="#c03424"/>
 <rect x="313.3" y="797" width="6.2" height="31.5" fill="url(#gz)"/>
 <path d="M309,801 L316.5,789.5 L324.5,801 Q316.5,798 309,801 Z" fill="#4060f4"/>
 <text x="311" y="788.5" font-family="Liberation Sans" font-size="14" fill="#3050e0">Z</text>
 <text x="273" y="810.5" font-family="Liberation Sans" font-size="14" fill="#3ab83a">Y</text>
 <text x="350" y="810.5" font-family="Liberation Sans" font-size="14" fill="#d03a2a">X</text>
</svg>
</body></html>
